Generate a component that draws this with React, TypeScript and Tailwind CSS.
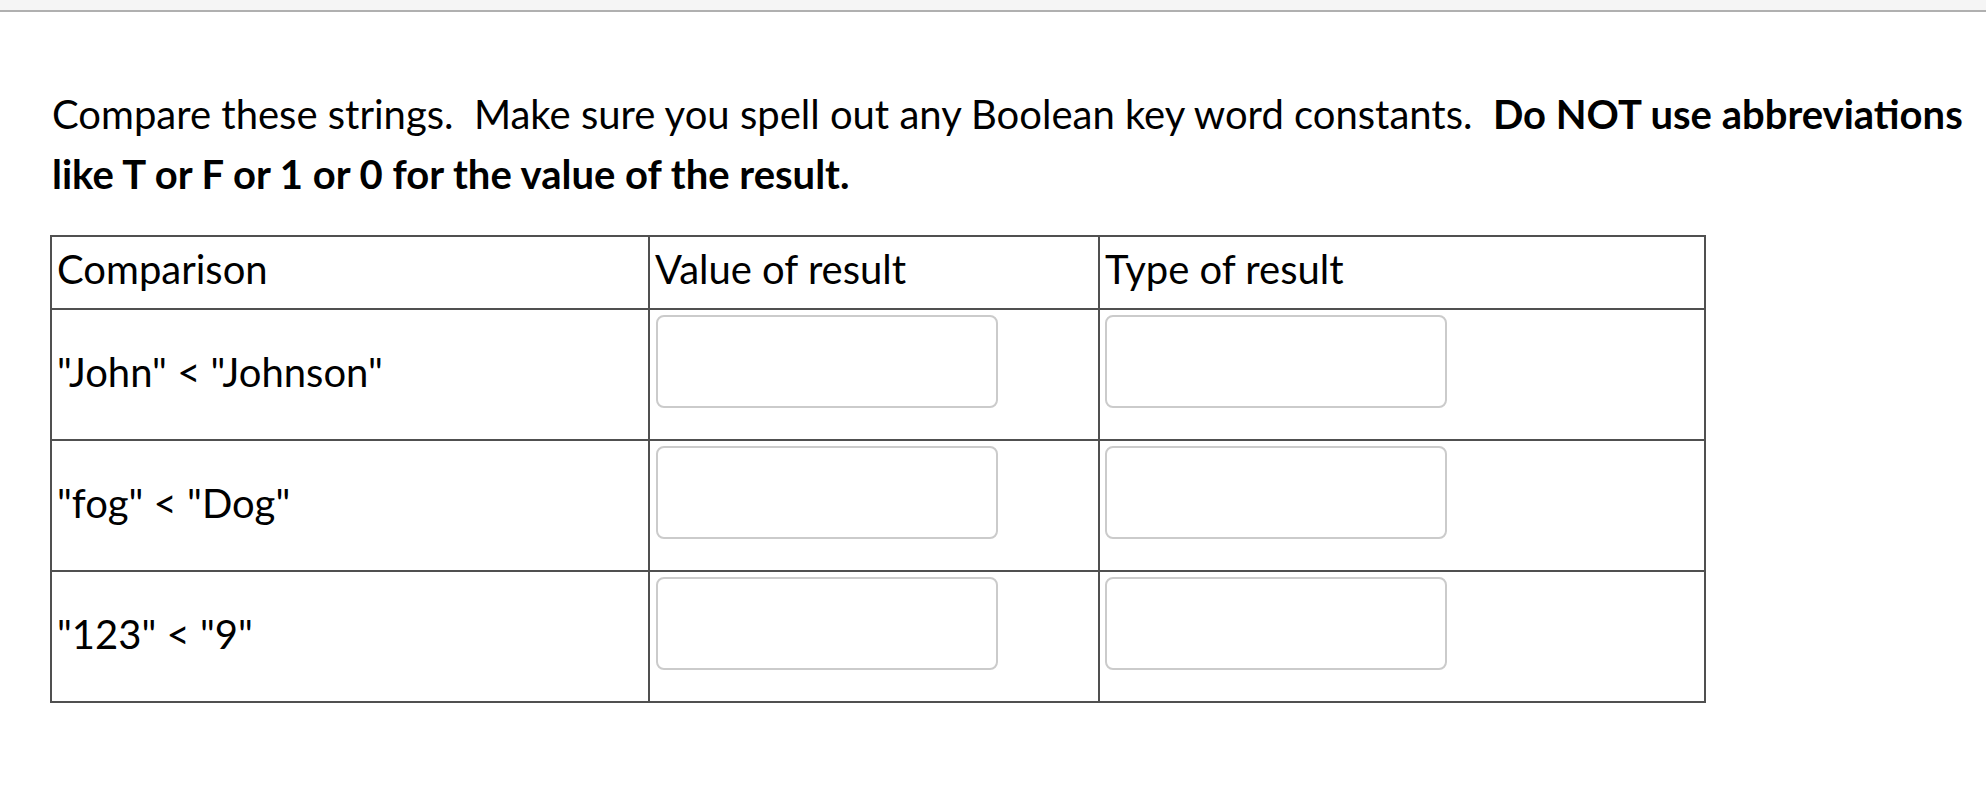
const rows = [
  { comparison: '"John" < "Johnson"' },
  { comparison: '"fog" < "Dog"' },
  { comparison: '"123" < "9"' },
];

const App = () => {
  return (
    <div className="min-h-screen bg-white font-['Lato',sans-serif] text-black">
      {/* top strip */}
      <div className="h-[12px] bg-[#f5f5f5] border-b-2 border-[#b0b0b0]" />

      <div className="pl-[52px] pr-[20px] pt-[72px]">
        <p className="text-[40px] leading-[60px]">
          Compare these strings.&nbsp; Make sure you spell out any Boolean key word constants.&nbsp;{" "}
          <strong className="font-bold">
            Do NOT use abbreviations like T or F or 1 or 0 for the value of the result.
          </strong>
        </p>
      </div>

      <table className="ml-[50px] mt-[31px] w-[1654px] table-fixed border-collapse border-2 border-[#505050] text-[40px] leading-[60px]">
        <colgroup>
          <col className="w-[598px]" />
          <col className="w-[450px]" />
          <col className="w-[606px]" />
        </colgroup>
        <thead>
          <tr className="h-[73px]">
            <th className="border-2 border-[#505050] px-[5px] pt-0 pb-[8px] text-left font-normal align-middle">Comparison</th>
            <th className="border-2 border-[#505050] px-[5px] pt-0 pb-[8px] text-left font-normal align-middle">Value of result</th>
            <th className="border-2 border-[#505050] px-[5px] pt-0 pb-[8px] text-left font-normal align-middle">Type of result</th>
          </tr>
        </thead>
        <tbody>
          {rows.map((row, idx) => (
            <tr key={idx} className="h-[131px]">
              <td className="border-2 border-[#505050] px-[5px] pb-[5px] align-middle">{row.comparison}</td>
              <td className="border-2 border-[#505050] pl-[6px] pt-[5px] align-top">
                <input
                  type="text"
                  className="block w-[342px] h-[93px] rounded-[8px] border-2 border-[#cbcbcb] bg-white"
                />
              </td>
              <td className="border-2 border-[#505050] pl-[5px] pt-[5px] align-top">
                <input
                  type="text"
                  className="block w-[342px] h-[93px] rounded-[8px] border-2 border-[#cbcbcb] bg-white"
                />
              </td>
            </tr>
          ))}
        </tbody>
      </table>
    </div>
  );
};

export default App;
